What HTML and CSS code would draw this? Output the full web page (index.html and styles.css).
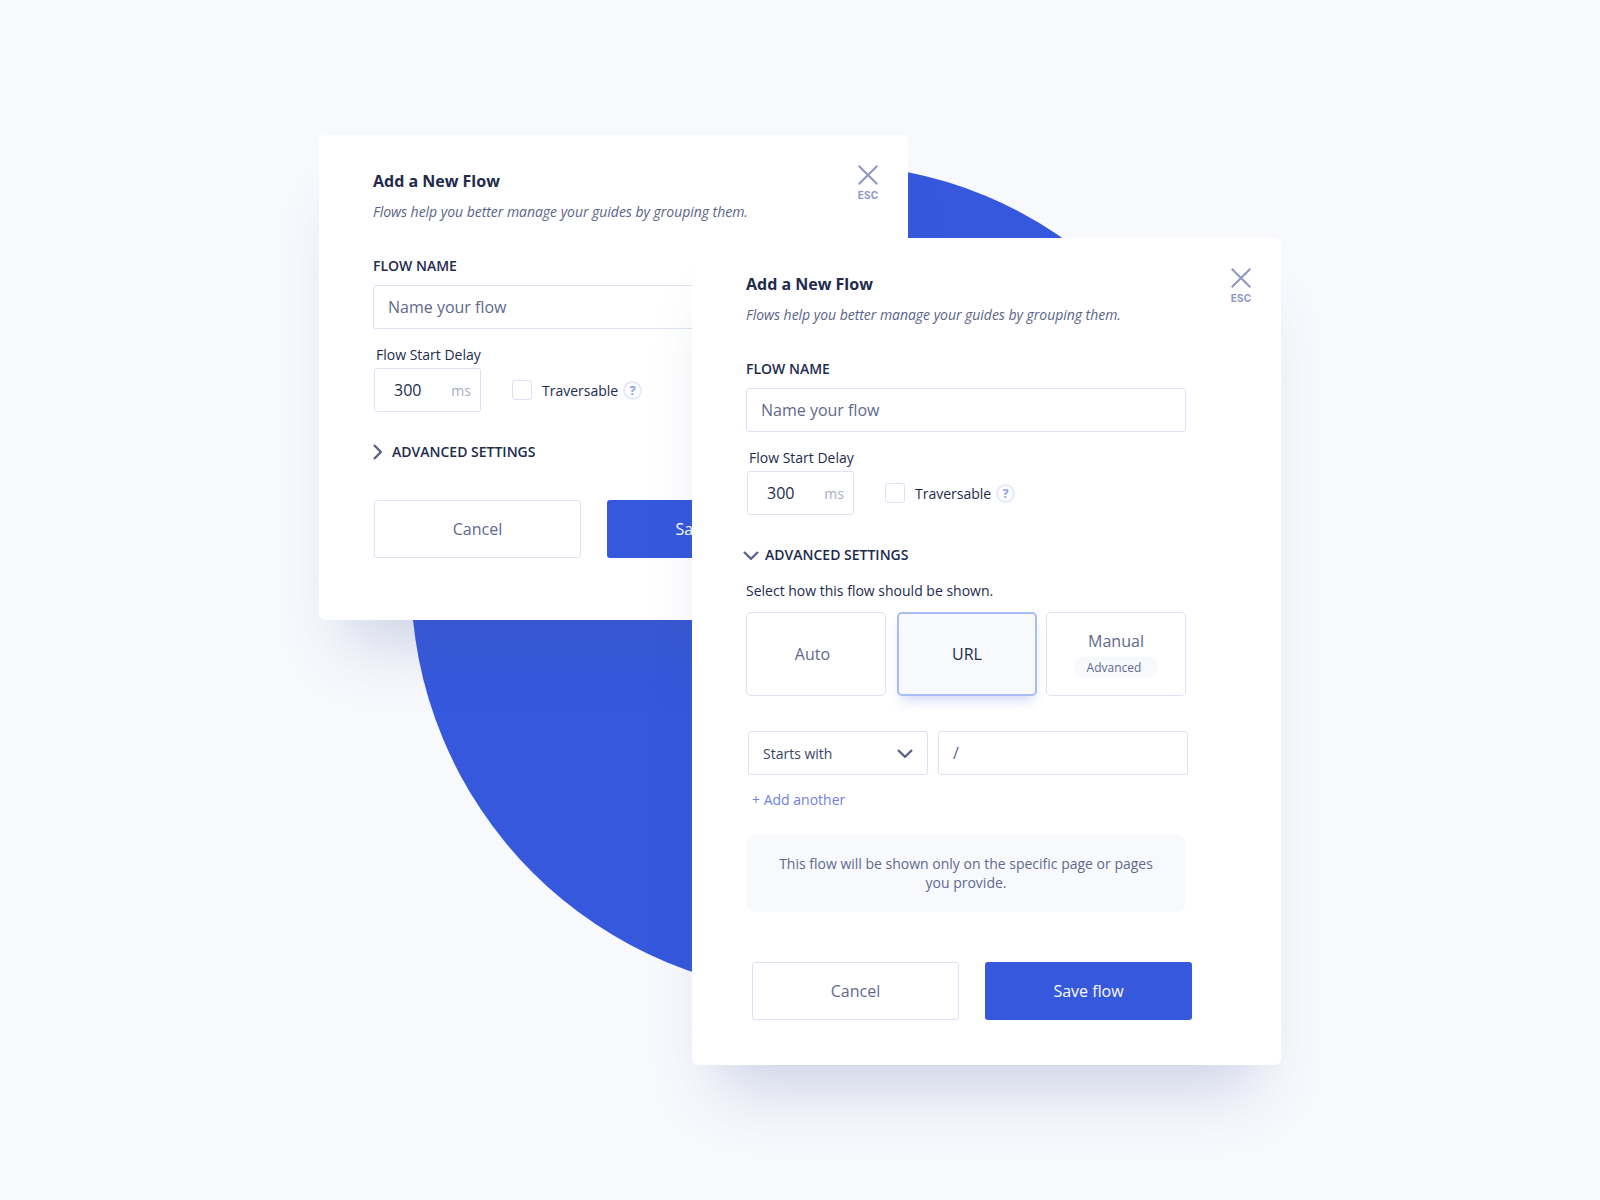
FILE: index.html
```html
<!DOCTYPE html>
<html lang="en">
<head>
<meta charset="utf-8">
<title>Add a New Flow</title>
<link rel="stylesheet" href="styles.css">
</head>
<body>
<main class="stage">
  <div class="circle"></div>

  <section class="card card-back">
    <button class="close" type="button">
      <svg class="close-x" viewBox="0 0 20 20" width="20" height="20"><path d="M0.7 0.7L19.3 19.3M19.3 0.7L0.7 19.3"/></svg>
      <span class="close-label">ESC</span>
    </button>
    <h2 class="title">Add a New Flow</h2>
    <p class="subtitle">Flows help you better manage your guides by grouping them.</p>
    <label class="field-label">FLOW NAME</label>
    <input class="text-input" type="text" placeholder="Name your flow">
    <div class="delay-label">Flow Start Delay</div>
    <div class="delay-row">
      <div class="number-input"><span class="number-value">300</span><span class="number-unit">ms</span></div>
      <span class="checkbox"></span>
      <span class="check-label">Traversable</span>
      <span class="help">?</span>
    </div>
    <div class="advanced">
      <svg class="chev-right" viewBox="0 0 9 16" width="9" height="16"><path d="M1 1L7.8 8L1 15"/></svg>
      <span class="advanced-label">ADVANCED SETTINGS</span>
    </div>
    <div class="actions actions-back">
      <button class="btn btn-ghost" type="button">Cancel</button>
      <button class="btn btn-primary" type="button">Save flow</button>
    </div>
  </section>

  <section class="card card-front">
    <button class="close" type="button">
      <svg class="close-x" viewBox="0 0 20 20" width="20" height="20"><path d="M0.7 0.7L19.3 19.3M19.3 0.7L0.7 19.3"/></svg>
      <span class="close-label">ESC</span>
    </button>
    <h2 class="title">Add a New Flow</h2>
    <p class="subtitle">Flows help you better manage your guides by grouping them.</p>
    <label class="field-label">FLOW NAME</label>
    <input class="text-input" type="text" placeholder="Name your flow">
    <div class="delay-label">Flow Start Delay</div>
    <div class="delay-row">
      <div class="number-input"><span class="number-value">300</span><span class="number-unit">ms</span></div>
      <span class="checkbox"></span>
      <span class="check-label">Traversable</span>
      <span class="help">?</span>
    </div>
    <div class="advanced advanced-open">
      <svg class="chev-down" viewBox="0 0 16 9" width="16" height="9"><path d="M1 1L8 7.8L15 1"/></svg>
      <span class="advanced-label">ADVANCED SETTINGS</span>
    </div>
    <p class="show-label">Select how this flow should be shown.</p>
    <div class="options">
      <div class="option option-auto">Auto</div>
      <div class="option option-url">URL</div>
      <div class="option option-manual">
        <span>Manual</span>
        <span class="badge">Advanced</span>
      </div>
    </div>
    <div class="url-row">
      <div class="select">
        <span>Starts with</span>
        <svg class="select-chev" viewBox="0 0 16 9" width="16" height="9"><path d="M1 1L8 7.8L15 1"/></svg>
      </div>
      <div class="url-input">/</div>
    </div>
    <a class="add-another">+ Add another</a>
    <div class="info">This flow will be shown only on the specific page or pages you provide.</div>
    <div class="actions actions-front">
      <button class="btn btn-ghost" type="button">Cancel</button>
      <button class="btn btn-primary" type="button">Save flow</button>
    </div>
  </section>
</main>
</body>
</html>
```

FILE: styles.css
```css
* { box-sizing: border-box; }

html, body {
  margin: 0;
  padding: 0;
}

body {
  background: #f8f9fd;
  font-family: "Open Sans", "Liberation Sans", sans-serif;
  color: #1f2747;
}

.stage {
  position: relative;
  width: 1600px;
  height: 1200px;
  overflow: hidden;
}

.circle {
  position: absolute;
  left: 411px;
  top: 164px;
  width: 830px;
  height: 830px;
  border-radius: 50%;
  background: #3558dc;
}

.card {
  position: absolute;
  width: 589px;
  padding: 35px 0 0 54px;
  background: #fff;
  border-radius: 6px;
  box-shadow: 0 50px 60px -28px rgba(70, 90, 160, .25);
}

.card-back {
  left: 319px;
  top: 135px;
  padding-bottom: 62px;
}

.card-front {
  left: 692px;
  top: 238px;
  padding-bottom: 45px;
}

.close {
  position: absolute;
  right: 28px;
  top: 30px;
  width: 24px;
  padding: 0;
  border: 0;
  background: none;
  display: flex;
  flex-direction: column;
  align-items: center;
  font-family: inherit;
}

.close-x path {
  fill: none;
  stroke: #8e97bf;
  stroke-width: 2;
}

.close-label {
  margin-top: 3px;
  font-family: "Inter", "Liberation Sans", sans-serif;
  font-size: 10px;
  line-height: 14px;
  font-weight: 700;
  letter-spacing: .2px;
  color: #8e97bf;
}

.title {
  margin: 0;
  font-size: 16px;
  line-height: 22px;
  font-weight: 700;
  color: #232b4d;
}

.subtitle {
  margin: 10px 0 0;
  font-size: 14px;
  line-height: 20px;
  font-style: italic;
  letter-spacing: -.03px;
  color: #5a6488;
}

.field-label {
  display: block;
  margin-top: 34px;
  font-size: 14px;
  line-height: 20px;
  font-weight: 600;
  color: #232b4d;
}

.text-input {
  display: block;
  width: 440px;
  height: 44px;
  margin-top: 9px;
  padding: 0 14px;
  border: 1px solid #dee1f3;
  border-radius: 3px;
  background: #fff;
  font-family: inherit;
  font-size: 16px;
  outline: none;
}

.text-input::placeholder {
  color: #5f698d;
  opacity: 1;
}

.delay-label {
  margin: 16px 0 0 3px;
  font-size: 14px;
  line-height: 20px;
  color: #232b4d;
}

.delay-row {
  display: flex;
  align-items: center;
  margin: 3px 0 0 1px;
}

.number-input {
  display: flex;
  align-items: center;
  justify-content: space-between;
  width: 107px;
  height: 44px;
  padding: 0 9px 0 19px;
  border: 1px solid #dee1f3;
  border-radius: 3px;
}

.number-value {
  font-size: 16px;
  color: #232b4d;
}

.number-unit {
  font-size: 14px;
  color: #a7adc9;
}

.checkbox {
  width: 20px;
  height: 20px;
  margin-left: 31px;
  border: 1px solid #dee1f3;
  border-radius: 3px;
}

.check-label {
  margin-left: 10px;
  font-size: 14px;
  color: #232b4d;
}

.help {
  display: flex;
  align-items: center;
  justify-content: center;
  width: 19px;
  height: 19px;
  margin-left: 5px;
  border: 2px solid #e6e9fb;
  border-radius: 50%;
  font-size: 13px;
  font-weight: 700;
  color: #8ba0f5;
}

.advanced {
  display: flex;
  align-items: center;
  margin-top: 30px;
  height: 20px;
}

.chev-right path,
.chev-down path,
.select-chev path {
  fill: none;
  stroke: #5a6488;
  stroke-width: 2.4;
}

.chev-down { margin-left: -3px; }

.advanced-label {
  margin-left: 10px;
  font-size: 14px;
  line-height: 20px;
  font-weight: 600;
  color: #232b4d;
}

.advanced-open .advanced-label { margin-left: 6px; }

.show-label {
  margin: 16px 0 0;
  font-size: 14px;
  line-height: 20px;
  color: #232b4d;
}

.options {
  display: flex;
  margin-top: 11px;
}

.option {
  display: flex;
  flex-direction: column;
  align-items: center;
  justify-content: center;
  width: 140px;
  height: 84px;
  border: 1px solid #dee1f3;
  border-radius: 5px;
  font-size: 16px;
  color: #5f698d;
}

.option-auto { padding-right: 7px; }

.option-url {
  margin: 0 9px 0 11px;
  border: 2px solid #a9bcf8;
  background: #f8f9fd;
  color: #232b4d;
  box-shadow: 0 8px 12px -4px rgba(90, 115, 220, .28);
}

.option-manual {
  padding-bottom: 2px;
  line-height: 22px;
}

.badge {
  width: 84px;
  height: 21px;
  margin-top: 5px;
  margin-bottom: -2px;
  padding-right: 4px;
  border-radius: 11px;
  background: #f8f9fd;
  font-size: 12px;
  line-height: 21px;
  text-align: center;
}

.url-row {
  display: flex;
  gap: 10px;
  width: 440px;
  margin: 35px 0 0 2px;
}

.select,
.url-input {
  display: flex;
  align-items: center;
  height: 44px;
  border: 1px solid #dee1f3;
  border-radius: 3px;
  font-size: 14px;
}

.select {
  flex: none;
  justify-content: space-between;
  width: 180px;
  padding: 0 14px 0 14px;
  color: #3c4566;
}

.url-input {
  flex: none;
  width: 250px;
  padding: 0 14px;
  font-size: 16px;
  color: #5a6488;
}

.add-another {
  display: block;
  margin: 15px 0 0 6px;
  font-size: 14px;
  line-height: 20px;
  color: #6e81dd;
}

.info {
  width: 440px;
  margin-top: 24px;
  padding: 20px 30px 20px;
  border-radius: 10px;
  background: #f8f9fd;
  font-size: 14px;
  line-height: 19px;
  text-align: center;
  color: #5f698d;
}

.actions {
  display: flex;
  gap: 26px;
}

.actions-back {
  margin: 38px 0 0 1px;
}

.actions-front {
  margin: 50px 0 0 6px;
}

.btn {
  width: 207px;
  height: 58px;
  border-radius: 3px;
  font-family: inherit;
  font-size: 16px;
}

.btn-ghost {
  border: 1px solid #dee1f3;
  background: #fff;
  color: #5f698d;
}

.btn-primary {
  border: 0;
  background: #3558dc;
  color: #fff;
}
```
